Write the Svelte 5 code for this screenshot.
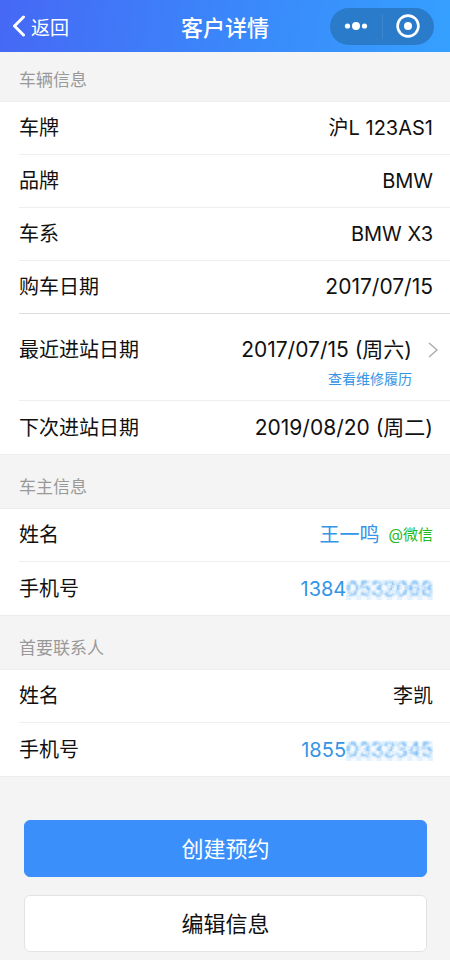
<script>
	// Groups of rows shown on the page
	const carRows = [
		{ label: "车牌", value: "沪L 123AS1" },
		{ label: "品牌", value: "BMW" },
		{ label: "车系", value: "BMW X3" },
	];

	const owner = { name: "王一鸣", phone: "1384", hidden: "0532068" };
	const contact = { name: "李凯", phone: "1855", hidden: "0332345" };

	// Mosaic tiles over the hidden part of a phone number
	const tiles = [];
	for (let row = 0; row < 4; row++) {
		for (let col = 0; col < 17; col++) {
			tiles.push({ x: col * 5, y: row * 5, light: (row + col) % 2 === 0 });
		}
	}
</script>

{#snippet phoneNumber(person)}
	<a class="link" href={`tel:${person.phone}`}>
		{person.phone}<span class="masked"
			><span class="digits">{person.hidden}</span><svg
				viewBox="0 0 85 20"
				preserveAspectRatio="none"
				aria-hidden="true"
			>
				{#each tiles as tile}
					<rect class:light={tile.light} x={tile.x} y={tile.y} width="5" height="5" />
				{/each}
			</svg></span
		>
	</a>
{/snippet}

<div class="page">
	<header>
		<a href="#back" class="back">
			<svg width="14" height="22" viewBox="0 0 14 22" aria-hidden="true">
				<path d="M11.5 2 2.5 11l9 9" />
			</svg>
			返回
		</a>
		<h1>客户详情</h1>
		<div class="capsule">
			<button aria-label="更多">
				<svg width="24" height="24" viewBox="0 0 24 24" aria-hidden="true">
					<circle cx="3.5" cy="12" r="2.6" />
					<circle cx="12" cy="12" r="4" />
					<circle cx="20.5" cy="12" r="2.6" />
				</svg>
			</button>
			<button aria-label="关闭">
				<svg width="24" height="24" viewBox="0 0 24 24" aria-hidden="true">
					<circle class="ring" cx="12" cy="12" r="10.4" />
					<circle cx="12" cy="12" r="4" />
				</svg>
			</button>
		</div>
	</header>

	<main>
		<h2>车辆信息</h2>
		<section>
			{#each carRows as row}
				<div class="row">
					<span>{row.label}</span>
					<span class="value">{row.value}</span>
				</div>
			{/each}
			<div class="row divider">
				<span>购车日期</span>
				<span class="date">2017/07/15</span>
			</div>
			<div class="row visit">
				<span>最近进站日期</span>
				<span class="date">2017/07/15 (周六)</span>
				<svg class="arrow" width="10" height="16" viewBox="0 0 10 16" aria-hidden="true">
					<path d="M1 1l8 7-8 7" />
				</svg>
				<a class="history" href="#history">查看维修履历</a>
			</div>
			<div class="row">
				<span>下次进站日期</span>
				<span class="date">2019/08/20 (周二)</span>
			</div>
		</section>

		<h2>车主信息</h2>
		<section>
			<div class="row">
				<span>姓名</span>
				<span class="value">
					<a class="link" href="#owner">{owner.name}</a>
					<a class="wechat" href="#wechat">@微信</a>
				</span>
			</div>
			<div class="row">
				<span>手机号</span>
				{@render phoneNumber(owner)}
			</div>
		</section>

		<h2>首要联系人</h2>
		<section>
			<div class="row">
				<span>姓名</span>
				<span class="value">{contact.name}</span>
			</div>
			<div class="row">
				<span>手机号</span>
				{@render phoneNumber(contact)}
			</div>
		</section>

		<div class="actions">
			<button class="primary">创建预约</button>
			<button>编辑信息</button>
		</div>
	</main>
</div>

<style>
	:global(body) {
		background-color: #f4f4f4;
	}

	.page {
		font-family: Inter, "Noto Sans CJK SC", sans-serif;
		font-size: 20px;
		color: #111;
	}

	a {
		color: inherit;
		text-decoration: none;
	}

	button {
		font: inherit;
		color: inherit;
		cursor: pointer;
	}

	header {
		display: grid;
		grid-template-columns: 1fr auto 1fr;
		align-items: center;
		height: 52px;
		padding: 0 12px;
		box-sizing: border-box;
		background: linear-gradient(100deg, #4668f5, #3b86fa 50%, #35a0ff);
		color: #fff;
	}

	.back {
		display: flex;
		align-items: center;
		gap: 5px;
		font-size: 19px;
	}

	.back path {
		fill: none;
		stroke: #fff;
		stroke-width: 3;
		stroke-linecap: round;
		stroke-linejoin: round;
	}

	h1 {
		margin: 0;
		font-size: 22px;
		font-weight: 500;
	}

	.capsule {
		justify-self: end;
		display: flex;
		width: 104px;
		height: 37px;
		margin-right: 4px;
		border-radius: 19px;
		background-color: #2b7bcb;
	}

	.capsule button {
		flex: 1;
		display: flex;
		align-items: center;
		justify-content: center;
		padding: 0;
		border: 0;
		background: none;
	}

	.capsule button + button {
		position: relative;
	}

	.capsule button + button::before {
		content: "";
		position: absolute;
		left: 0;
		top: 6px;
		bottom: 6px;
		width: 1px;
		background-color: #3c87d0;
	}

	.capsule circle {
		fill: #fff;
	}

	.capsule .ring {
		fill: none;
		stroke: #fff;
		stroke-width: 2.6;
	}

	h2 {
		margin: 0;
		padding: 21px 19px 10px;
		font-size: 17px;
		line-height: 24px;
		font-weight: 400;
		color: #999;
	}

	h2:first-child {
		padding-top: 16px;
	}

	section {
		padding-left: 19px;
		background-color: #fff;
		box-shadow: 0 0 0 1px #ededed;
	}

	.row {
		display: flex;
		align-items: center;
		justify-content: space-between;
		min-height: 53px;
		padding-right: 17px;
		box-sizing: border-box;
		border-bottom: 1px solid #eee;
		line-height: 28px;
		white-space: nowrap;
	}

	.row:last-child {
		border-bottom: 0;
	}

	.row.divider {
		border-bottom-color: #ddd;
	}

	.value {
		display: flex;
		align-items: center;
		gap: 9px;
	}

	.date {
		font-size: 21px;
	}

	.row.visit {
		display: grid;
		grid-template-columns: 1fr auto 26px;
		padding: 22px 12px 6px 0;
	}

	.arrow {
		justify-self: end;
	}

	.arrow path {
		fill: none;
		stroke: #aaa;
		stroke-width: 1.4;
	}

	.history {
		grid-column: 2;
		justify-self: end;
		font-size: 14px;
		line-height: 30px;
		color: #3494e6;
	}

	.link {
		color: #3494e6;
	}

	.wechat {
		font-size: 15px;
		color: #1fb922;
	}

	.masked {
		position: relative;
	}

	.digits {
		color: #4ba3f0;
		filter: blur(1px);
	}

	.masked svg {
		position: absolute;
		left: 0;
		top: 3px;
		width: 100%;
		height: 20px;
	}

	.masked rect {
		fill: #a9d4fb;
		opacity: 0.3;
	}

	.masked rect.light {
		fill: #eef7ff;
		opacity: 0.5;
	}

	.actions {
		display: flex;
		flex-direction: column;
		gap: 18px;
		padding: 44px 23px 8px 24px;
	}

	.actions button {
		height: 57px;
		padding: 0 0 4px;
		border: 1px solid #e3e3e3;
		border-radius: 6px;
		background-color: #fff;
		font-size: 22px;
	}

	.actions .primary {
		border-color: #3a8ffb;
		background-color: #3a8ffb;
		color: #fff;
	}
</style>
